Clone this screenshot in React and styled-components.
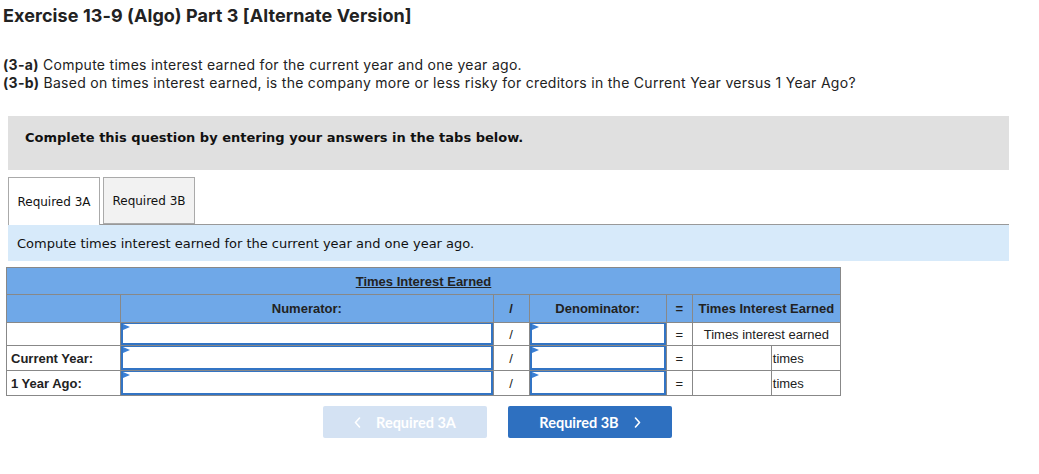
import React from "react";
import styled, { createGlobalStyle } from "styled-components";

const Global = createGlobalStyle`
  html, body { margin: 0; padding: 0; background: #fff; }
  body { font-family: "Liberation Sans", Arial, sans-serif; color: #222; }
`;

const Page = styled.div`
  width: 1039px;
  height: 474px;
  box-sizing: border-box;
  padding: 5px 30px 0 8px;
  display: flex;
  flex-direction: column;
`;

const Title = styled.h1`
  margin: 0 0 0 -5px;
  font-family: Inter, Lato, sans-serif;
  font-weight: 700;
  font-size: 18px;
  line-height: 22px;
  letter-spacing: 0.08px;
  color: #222;
`;

const Prompt = styled.div`
  margin: 29px 0 0 -5px;
  font-family: Inter, Lato, sans-serif;
  font-size: 14px;
  line-height: 18px;
  letter-spacing: 0.29px;
  color: #222;
  b { font-weight: 700; }
`;

const Banner = styled.div`
  margin-top: 24px;
  height: 54px;
  box-sizing: border-box;
  background: #e0e0e0;
  padding: 14px 0 0 17px;
  font-family: "DejaVu Sans", Verdana, sans-serif;
  font-weight: 700;
  font-size: 13px;
  line-height: 16px;
  color: #111;
`;

const Tabs = styled.div`
  margin-top: 7px;
  display: flex;
  gap: 3px;
  border-bottom: 1px solid #999;
  height: 47px;
  box-sizing: content-box;
`;

const Tab = styled.div`
  width: 92px;
  height: ${(p) => (p.$active ? "48px" : "47px")};
  box-sizing: border-box;
  border: 1px solid #aaa;
  border-bottom: ${(p) => (p.$active ? "none" : "1px solid #aaa")};
  background: ${(p) => (p.$active ? "#fff" : "#f2f2f2")};
  display: flex;
  align-items: center;
  justify-content: center;
  font-family: "DejaVu Sans", Verdana, sans-serif;
  font-size: 12px;
  color: #111;
  position: relative;
  z-index: 1;
`;

const Instruction = styled.div`
  height: 36px;
  background: #d7eafa;
  display: flex;
  align-items: center;
  padding-left: 9px;
  font-family: "DejaVu Sans", Verdana, sans-serif;
  font-size: 13px;
  color: #111;
`;

const Table = styled.table`
  margin: 6px 0 0 -2px;
  border-collapse: collapse;
  width: 835px;
  table-layout: fixed;
  font-family: "Liberation Sans", Arial, sans-serif;
  font-size: 13px;
  color: #222;
  border: 1px solid #777;
`;

const Cell = styled.td`
  border: 1px solid #888;
  padding: 0;
  height: ${(p) => p.$h || "23px"};
  text-align: ${(p) => p.$align || "center"};
  font-weight: ${(p) => (p.$bold ? 700 : 400)};
  background: ${(p) => (p.$head ? "#6fa8e8" : "#fff")};
  padding-left: ${(p) => p.$pl || "0"};
  vertical-align: middle;
  position: relative;
`;

const Underlined = styled.span`
  text-decoration: underline;
  font-weight: 700;
`;

const InputBox = styled.div`
  position: absolute;
  inset: 0;
  border: 2px solid #3274c4;
  border-top-width: 1px;
  background: #fff;
  &::before {
    content: "";
    position: absolute;
    left: 0;
    top: 0;
    border-left: 7px solid #3a7fd4;
    border-top: 3px solid transparent;
    border-bottom: 3px solid transparent;
  }
`;

const Buttons = styled.div`
  margin: 10px 0 0 315px;
  display: flex;
  gap: 21px;
`;

const NavButton = styled.button`
  flex: 0 0 164px;
  height: 32px;
  border: none;
  border-radius: 2px;
  background: ${(p) => (p.$disabled ? "#d4e2f3" : "#2e70c0")};
  color: #fff;
  font-family: Lato, "Liberation Sans", sans-serif;
  font-weight: 700;
  font-size: 14.5px;
  display: flex;
  align-items: center;
  justify-content: center;
  gap: 15px;
  padding: 0;
  cursor: pointer;
`;

const Chevron = ({ dir }) => (
  <svg width="7" height="11" viewBox="0 0 7 11" fill="none">
    <path
      d={dir === "left" ? "M5.5 1 L1.5 5.5 L5.5 10" : "M1.5 1 L5.5 5.5 L1.5 10"}
      stroke="#fff"
      strokeWidth="1.6"
      strokeLinecap="round"
      strokeLinejoin="round"
    />
  </svg>
);

const rows = [
  { label: "", result: "merged", h: "22px" },
  { label: "Current Year:", result: "times", h: "24px" },
  { label: "1 Year Ago:", result: "times", h: "24px" },
];

export default function App() {
  return (
    <>
      <Global />
      <Page>
        <Title>Exercise 13-9 (Algo) Part 3 [Alternate Version]</Title>
        <Prompt>
          <div>
            <b>(3-a)</b> Compute times interest earned for the current year and one year ago.
          </div>
          <div>
            <b>(3-b)</b> Based on times interest earned, is the company more or less risky for creditors in the Current Year versus 1 Year Ago?
          </div>
        </Prompt>
        <Banner>Complete this question by entering your answers in the tabs below.</Banner>
        <Tabs>
          <Tab $active>Required 3A</Tab>
          <Tab>Required 3B</Tab>
        </Tabs>
        <Instruction>Compute times interest earned for the current year and one year ago.</Instruction>
        <Table>
          <colgroup>
            <col style={{ width: 114 }} />
            <col style={{ width: 372 }} />
            <col style={{ width: 36 }} />
            <col style={{ width: 137 }} />
            <col style={{ width: 26 }} />
            <col style={{ width: 79 }} />
            <col style={{ width: 69 }} />
          </colgroup>
          <tbody>
            <tr>
              <Cell $head colSpan={7} $h="26px">
                <Underlined>Times Interest Earned</Underlined>
              </Cell>
            </tr>
            <tr>
              <Cell $head $h="27px" />
              <Cell $head $bold $h="27px">Numerator:</Cell>
              <Cell $head $bold $h="27px">/</Cell>
              <Cell $head $bold $h="27px">Denominator:</Cell>
              <Cell $head $bold $h="27px">=</Cell>
              <Cell $head $bold colSpan={2} $h="27px">Times Interest Earned</Cell>
            </tr>
            {rows.map((r, i) => (
              <tr key={i}>
                <Cell $align="left" $bold $pl="4px" $h={r.h}>{r.label}</Cell>
                <Cell $h={r.h}><InputBox /></Cell>
                <Cell $h={r.h}>/</Cell>
                <Cell $h={r.h}><InputBox /></Cell>
                <Cell $h={r.h}>=</Cell>
                {r.result === "merged" ? (
                  <Cell colSpan={2} $h={r.h}>Times interest earned</Cell>
                ) : (
                  <>
                    <Cell $h={r.h} />
                    <Cell $align="left" $pl="1px" $h={r.h}>times</Cell>
                  </>
                )}
              </tr>
            ))}
          </tbody>
        </Table>
        <Buttons>
          <NavButton $disabled>
            <Chevron dir="left" />
            Required 3A
          </NavButton>
          <NavButton>
            Required 3B
            <Chevron dir="right" />
          </NavButton>
        </Buttons>
      </Page>
    </>
  );
}
